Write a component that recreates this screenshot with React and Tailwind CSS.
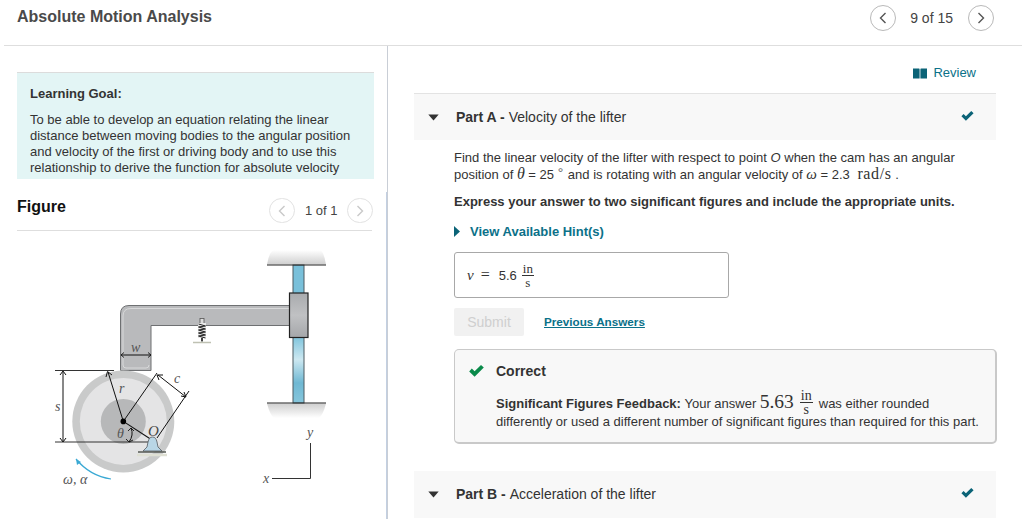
const sans = "font-['Liberation_Sans',Arial,sans-serif]";

function Chevron({ dir, big, faint }) {
  const size = big ? "w-[26px] h-[26px]" : "w-[26px] h-[25px]";
  const colour = faint ? "border-[#e2e2e2] text-[#c9c9c9]" : "border-[#b9b9b9] text-[#555555]";
  return (
    <span className={`${size} ${colour} rounded-full border flex items-center justify-center bg-white`}>
      <svg width="10" height="12" viewBox="0 0 10 12" fill="none" stroke="currentColor" strokeWidth="1.4">
        {dir === "l" ? <path d="M7.5 1 L2.5 6 L7.5 11" /> : <path d="M2.5 1 L7.5 6 L2.5 11" />}
      </svg>
    </span>
  );
}

function Check({ colour, w = 13, h = 10 }) {
  return (
    <svg width={w} height={h} viewBox="0 0 15 12" fill={colour}>
      <path d="M0.2 6.4 L2.8 3.6 L5.6 6.2 L12 0 L14.8 2.6 L5.6 11.8 Z" />
    </svg>
  );
}

function Down() {
  return (
    <svg width="11" height="7" viewBox="0 0 11 7" fill="#333333">
      <path d="M0.3 0.5 H10.7 L5.5 6.5 Z" />
    </svg>
  );
}

function PartBar({ label, title, top }) {
  return (
    <div className={`h-[47px] bg-[#f8f8f8] flex items-center pl-[14px] pr-[22px] ${top ? "border-t border-[#e3e3e3]" : ""}`}>
      <Down />
      <div className="ml-[17px] flex-1 text-[14px] text-[#333333]">
        <span className="font-bold">{label} - </span>{title}
      </div>
      <span className="-mt-[3px]"><Check colour="#0b6377" /></span>
    </div>
  );
}

function Frac({ small }) {
  return (
    <span className={`inline-flex flex-col items-center align-middle font-['Liberation_Serif',serif] leading-[11px] ${small ? "text-[14px] ml-[6px] mr-[6px] -mt-[3px]" : "text-[13px] mx-[5px]"}`}>
      <span className="border-b border-[#333333] px-[1px] pb-[1px]">in</span>
      <span className="pt-[1px]">s</span>
    </span>
  );
}

function Figure() {
  const t = "font-['Liberation_Serif',serif] italic";
  return (
    <svg width="370" height="279" viewBox="0 240 370 279" className="block">
      <defs>
        <linearGradient id="cap1" x1="0" y1="0" x2="0" y2="1">
          <stop offset="0" stopColor="#ffffff" />
          <stop offset="1" stopColor="#cfcfcf" />
        </linearGradient>
        <linearGradient id="cap2" x1="0" y1="0" x2="0" y2="1">
          <stop offset="0" stopColor="#cfcfcf" />
          <stop offset="1" stopColor="#ffffff" />
        </linearGradient>
        <linearGradient id="rod" x1="0" y1="0" x2="0" y2="1">
          <stop offset="0" stopColor="#7cc3dc" />
          <stop offset="0.35" stopColor="#cde8f1" />
          <stop offset="0.7" stopColor="#6fb8d3" />
          <stop offset="1" stopColor="#86c6dc" />
        </linearGradient>
        <linearGradient id="collar" x1="0" y1="0" x2="0" y2="1">
          <stop offset="0" stopColor="#a9abae" />
          <stop offset="0.5" stopColor="#c0c1c3" />
          <stop offset="1" stopColor="#a5a7aa" />
        </linearGradient>
      </defs>

      <path d="M274 250 H320 Q324 252 326 264.5 H267 Q269 252 274 250 Z" fill="url(#cap1)" />
      <path d="M267 403.5 H326 Q323 415 319 418 H274 Q270 415 267 403.5 Z" fill="url(#cap2)" />
      <rect x="293" y="265" width="11" height="30" fill="#79c0da" stroke="#4d5a60" strokeWidth="1" />
      <rect x="293" y="336" width="11" height="67" fill="url(#rod)" stroke="#4d5a60" strokeWidth="1" />
      <path d="M267 265 H326 M267 403 H326" stroke="#222222" strokeWidth="1.2" />

      <path d="M289.5 305.5 H129 Q120.5 305.5 120.5 314 V370.5 H151 V325.5 H289.5 Z" fill="#b9babc" stroke="#6e7072" strokeWidth="1" />
      <path d="M289 308.5 H131 Q123 308.5 123 316 V365 Q123 368 126 368 H146 Q149 368 149 365" fill="none" stroke="#d8d9da" strokeWidth="1" />
      <rect x="289.5" y="293" width="18.5" height="44.5" fill="url(#collar)" stroke="#222222" strokeWidth="1.2" />

      <rect x="200" y="318.5" width="4" height="5" fill="#dddddd" stroke="#555555" strokeWidth="0.8" />
      <rect x="198" y="323" width="8" height="15" fill="#e8e8e8" />
      <path d="M198.5 324 L205.5 326 M205.5 326 L198.5 327 L205.5 329 M205.5 329 L198.5 330 L205.5 332 M205.5 332 L198.5 333 L205.5 335 M205.5 335 L198.5 336 L205.5 338" stroke="#222222" strokeWidth="1" fill="none" />
      <path d="M202 338 V341.5" stroke="#111111" strokeWidth="1.6" />
      <path d="M193 342.5 H211" stroke="#bfc1b3" strokeWidth="1.5" />

      <circle cx="123.3" cy="421.4" r="51" fill="#c9caca" />
      <circle cx="123.3" cy="421.4" r="43.5" fill="#e4e4e5" />
      <circle cx="123.3" cy="421.4" r="22.5" fill="#b7b8b9" />

      <path d="M55 370.5 H114 M55 442 H150" stroke="#333333" strokeWidth="1" fill="none" />
      <path d="M63 372 V441" stroke="#111111" strokeWidth="1" />
      <path d="M60 375 L63 371 L66 375 M60 438 L63 442 L66 438" stroke="#111111" fill="none" strokeWidth="1" />
      <path d="M123.3 421.4 L108 372" stroke="#111111" strokeWidth="1" />
      <path d="M106 377 L107.5 371.5 L112 375" stroke="#111111" fill="none" strokeWidth="1" />
      <path d="M123.3 421.4 L157 373" stroke="#111111" strokeWidth="1" />
      <path d="M157 438 L189 391" stroke="#111111" strokeWidth="1" />
      <path d="M158 375 L186 397" stroke="#111111" strokeWidth="1" />
      <path d="M159 380 L157 375 L163 375 M181 396 L186 397 L184 392" stroke="#111111" fill="none" strokeWidth="1" />
      <path d="M123.3 421.4 L152 440" stroke="#111111" strokeWidth="1.1" />
      <path d="M131 428 Q134 435 129 442" stroke="#111111" fill="none" strokeWidth="1" />
      <path d="M128 431 L131 428 L134 431 M126 439 L129 442 L133 440" stroke="#111111" fill="none" strokeWidth="0.9" />
      <path d="M121.5 355 H151" stroke="#111111" strokeWidth="1" />
      <path d="M124 352.5 L121 355 L124 357.5 M148 352.5 L151 355 L148 357.5" stroke="#111111" fill="none" strokeWidth="0.9" />
      <circle cx="123.3" cy="421.4" r="2.8" fill="#000000" />

      <path d="M143 451 L147 447 L148 442 Q149 437 152.5 437 Q156 437 157 442 L158 447 L162 451 Z" fill="#b9d6e6" stroke="#555b60" strokeWidth="0.8" />
      <path d="M138 452 H166" stroke="#4b4f4a" strokeWidth="1.4" />
      <path d="M137 455 H167" stroke="#dfe0d4" strokeWidth="2.5" />

      <path d="M76 459 Q90 476 111 479" stroke="#3aa9d4" strokeWidth="1.2" fill="none" />
      <path d="M76 459 L77 465 L81 462 Z" fill="#3aa9d4" />

      <path d="M272 478.5 H310.5 V443" stroke="#333333" strokeWidth="1" fill="none" />

      <text x="131" y="352" fontSize="14" fill="#555555" className={t}>w</text>
      <text x="55" y="411" fontSize="14" fill="#555555" className={t}>s</text>
      <text x="119" y="393" fontSize="14" fill="#555555" className={t}>r</text>
      <text x="174" y="383" fontSize="14" fill="#555555" className={t}>c</text>
      <text x="117" y="438" fontSize="14" fill="#555555" className={t}>θ</text>
      <text x="148" y="436" fontSize="15" fill="#444444" className={t}>O</text>
      <text x="63" y="484" fontSize="14" fill="#555555" className={t}>ω, α</text>
      <text x="263" y="483" fontSize="14" fill="#555555" className={t}>x</text>
      <text x="307" y="437" fontSize="14" fill="#555555" className={t}>y</text>
    </svg>
  );
}

export default function App() {
  return (
    <div className={`${sans} w-[1025px] h-[519px] overflow-hidden bg-white flex flex-col text-[#333333]`}>
      <header className="h-[46px] shrink-0 mx-[4px] mr-[3px] border-b border-[#dedede] flex items-start justify-between pl-[13px] pr-[28px]">
        <h1 className="text-[16px] font-bold text-[#4a4a4a] leading-[18px] mt-[8px]">Absolute Motion Analysis</h1>
        <div className="flex items-center mt-[5px]">
          <Chevron dir="l" big />
          <span className="text-[14px] ml-[14px] mr-[15px] text-[#444444]">9 of 15</span>
          <Chevron dir="r" big />
        </div>
      </header>

      <div className="flex flex-1 min-h-0">
        <aside className="w-[388px] shrink-0 border-r border-[#c9ced6] pl-[17px] pr-[13px] pt-[26px] relative overflow-hidden">
          <div className="h-[107px] bg-[#e3f5f5] border-t border-[#dcdcdc] overflow-hidden px-[13px] pt-[13px] text-[#333333]">
            <div className="font-bold text-[13px] leading-[16px] mb-[10px]">Learning Goal:</div>
            <p className="leading-[16px] text-[13px]">To be able to develop an equation relating the linear distance between moving bodies to the angular position and velocity of the first or driving body and to use this relationship to derive the function for absolute velocity and acceleration of the cam and lifter.</p>
          </div>
          <div className="flex items-start justify-between h-[52px] border-b border-[#dedede] mr-[2px]">
            <span className="text-[16px] font-bold leading-[20px] text-[#111111] mt-[18px]">Figure</span>
            <div className="flex items-center mt-[19px] -mr-[1px]">
              <Chevron dir="l" faint />
              <span className="text-[13px] mx-[9.5px] text-[#444444]">1 of 1</span>
              <Chevron dir="r" faint />
            </div>
          </div>
          <div className="-ml-[17px] mt-[9px]"><Figure /></div>
          <div className="absolute right-[-1px] top-[146px] bottom-0 w-[2px] bg-[#c3d0e2]" />
        </aside>

        <main className="flex-1 min-w-0 pl-[26px] pr-[29px]">
          <div className="h-[47px] flex items-start justify-end pr-[20px] pt-[19px]">
            <span className="flex items-center text-[13px] leading-[16px] text-[#0b7189]">
              <svg width="14" height="11" viewBox="0 0 14 11" className="mr-[6px]" fill="#0b6377">
                <path d="M0 0.5 H6 Q6.6 0.5 6.6 1.2 V10.5 H0 Z M7.4 1.2 Q7.4 0.5 8 0.5 H14 V10.5 H7.4 Z" />
              </svg>
              Review
            </span>
          </div>
          <PartBar label="Part A" title="Velocity of the lifter" top />
          <div className="pl-[40px]">
            <p className="mt-[9px] text-[13px] leading-[17px] text-[#333333] whitespace-nowrap">
              Find the linear velocity of the lifter with respect to point <i>O</i> when the cam has an angular<br />
              position of <i className="font-['Liberation_Serif',serif] text-[16px] leading-[10px]">θ</i> = 25 <span className="text-[14px] leading-[10px] text-[#666666] align-[1px] mr-[1px]">°</span> and is rotating with an angular velocity of <i className="font-['Liberation_Serif',serif] text-[15px] leading-[10px]">ω</i> = 2.3 <span className="font-['Liberation_Serif',serif] text-[16px] leading-[10px] ml-[4px] tracking-[0.6px]">rad/s</span> .
            </p>
            <p className="mt-[10px] text-[13px] leading-[17px] font-bold whitespace-nowrap">Express your answer to two significant figures and include the appropriate units.</p>
            <div className="mt-[13px] flex items-center text-[13px] leading-[17px] font-bold text-[#0b7189]">
              <svg width="6" height="11" viewBox="0 0 6 11" fill="#0b6377" className="mr-[10px]"><path d="M0 0 L6 5.5 L0 11 Z" /></svg>
              View Available Hint(s)
            </div>
            <div className="mt-[12px] w-[275px] h-[46px] rounded-[3px] border border-[#a8a8a8] flex items-center pl-[12px] text-[13px] leading-none">
              <i className="font-['Liberation_Serif',serif] text-[15px]">v</i>
              <span className="font-['Liberation_Serif',serif] text-[16px] ml-[7px] mr-[9px]">=</span>
              <span>5.6</span>
              <Frac />
            </div>
            <div className="mt-[10px] flex items-center">
              <span className="w-[70px] h-[28px] bg-[#f1f1f1] rounded-[2px] flex items-center justify-center text-[14px] text-[#cfcfcf]">Submit</span>
              <span className="ml-[20px] text-[11.7px] font-bold text-[#0b7189] underline">Previous Answers</span>
            </div>
            <div className="mt-[13px] -mr-[1px] h-[95px] rounded-[5px] border border-[#c9c9c9] border-b-2 border-r-2 bg-[#f8f8f8] pl-[14px] pt-[13px]">
              <div className="flex items-center h-[16px]">
                <Check colour="#0a8a4a" w={15} h={12} />
                <span className="ml-[12px] text-[14px] font-bold text-[#333333]">Correct</span>
              </div>
              <div className="mt-[15px] pl-[27px] text-[13px] leading-[18px]">
                <div className="h-[19px] flex items-center whitespace-nowrap">
                  <b>Significant Figures Feedback:</b>
                  <span className="ml-[3.5px]">Your answer</span>
                  <span className="font-['Liberation_Serif',serif] text-[19.5px] ml-[3.5px] -mt-[3px]">5.63</span>
                  <Frac small />
                  <span>was either rounded</span>
                </div>
                <div className="whitespace-nowrap">differently or used a different number of significant figures than required for this part.</div>
              </div>
            </div>
            <div className="h-[27px]" />
          </div>
          <PartBar label="Part B" title="Acceleration of the lifter" />
        </main>
      </div>
    </div>
  );
}
